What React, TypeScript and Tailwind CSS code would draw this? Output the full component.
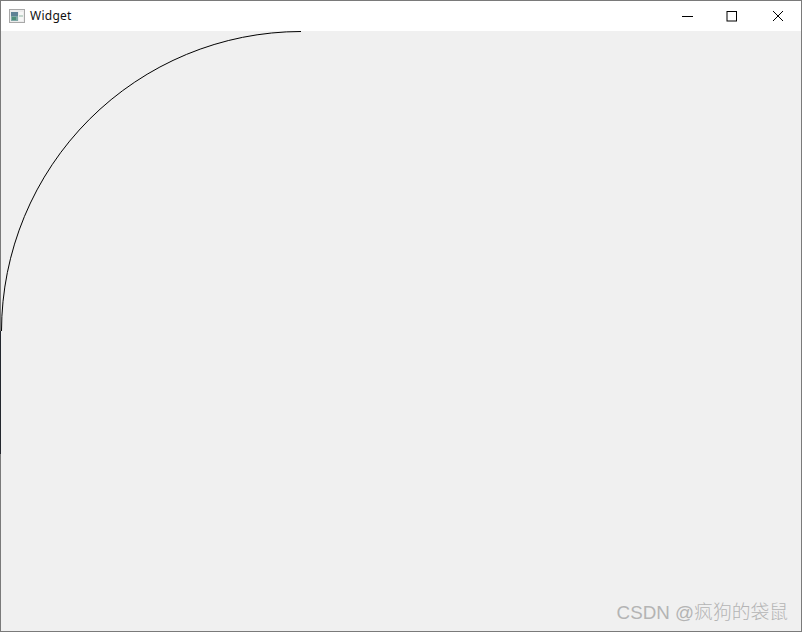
export default function App() {
  return (
    <div className="relative w-[802px] h-[632px] flex flex-col border border-[#7a7a7a] bg-[#f0f0f0] font-['Liberation_Sans',sans-serif]">
      <div className="h-[30px] shrink-0 bg-white flex items-center">
        <svg className="ml-[8px] mt-[-1px]" width="16" height="14" viewBox="0 0 16 14">
          <rect x="0.5" y="0.5" width="15" height="13" fill="#ececec" stroke="#a8a8a8" />
          <rect x="2" y="3" width="7" height="9" fill="#7fa8a6" />
          <rect x="2" y="3" width="7" height="4" fill="#5f8296" />
          <rect x="3" y="8" width="4" height="3" fill="#4f8f7a" />
          <rect x="10" y="3" width="4" height="9" fill="#f6f6f6" />
          <rect x="10" y="6" width="4" height="2" fill="#c3d6cc" />
        </svg>
        <span className="ml-[5px] text-[12px] leading-none tracking-[0.25px] text-[#101010] font-['Noto_Sans',sans-serif]">Widget</span>
        <div className="ml-auto flex items-center h-full">
          <div className="w-[45px] h-full flex items-center justify-center">
            <svg width="11" height="11" viewBox="0 0 11 11"><path d="M0 5.5H11" stroke="#000" strokeWidth="1" /></svg>
          </div>
          <div className="w-[45px] h-full flex items-center justify-center pr-[2px]">
            <svg width="11" height="11" viewBox="0 0 11 11"><rect x="1" y="0.5" width="9.5" height="9.5" fill="none" stroke="#000" /></svg>
          </div>
          <div className="w-[46px] h-full flex items-center justify-center">
            <svg width="12" height="12" viewBox="0 0 12 12"><path d="M1 1L11 11M11 1L1 11" stroke="#000" strokeWidth="1" fill="none" /></svg>
          </div>
        </div>
      </div>
      <div className="relative flex-1">
        <svg className="block overflow-visible" width="800" height="600" viewBox="0 0 800 600">
          <path d="M0.5 300A300 300 0 0 1 300 0.5" fill="none" stroke="#000" strokeWidth="1" />
          <path d="M-0.5 300V423" fill="none" stroke="#23272e" strokeWidth="1" />
        </svg>
        <span className="absolute right-[13px] bottom-[6px] text-[18.8px] leading-[24px] font-light text-[#b4b4b4] font-['Liberation_Sans','Noto_Sans_CJK_SC',sans-serif]">
          CSDN @疯狗的袋鼠
        </span>
      </div>
    </div>
  );
}
